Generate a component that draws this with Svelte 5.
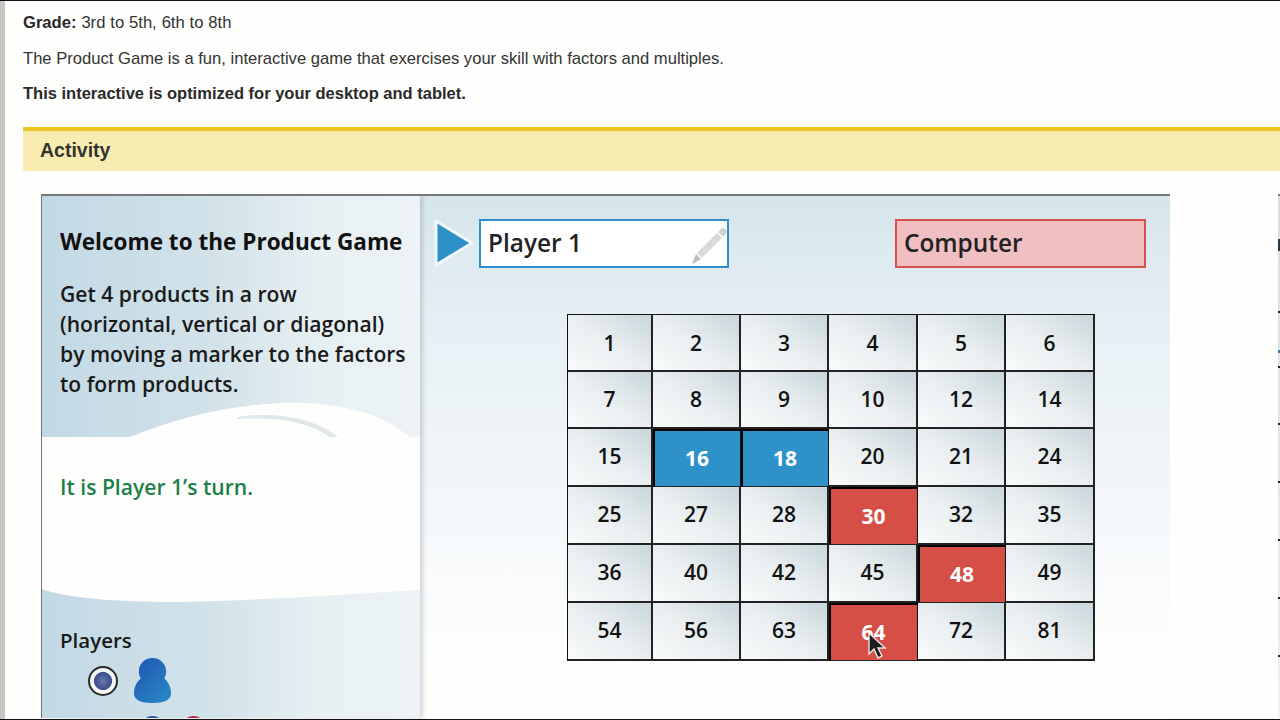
<script lang="ts">
	type Mark = 'p1' | 'p2' | null;

	const marks: Record<number, Mark> = { 16: 'p1', 18: 'p1', 30: 'p2', 48: 'p2', 64: 'p2' };
	const products = [
		1, 2, 3, 4, 5, 6, 7, 8, 9, 10, 12, 14, 15, 16, 18, 20, 21, 24, 25, 27, 28, 30, 32, 35, 36, 40,
		42, 45, 48, 49, 54, 56, 63, 64, 72, 81
	];
	// what shows of the next activity at the right edge: [gap above, height, colour]
	const sliver: [number, number, string][] = [
		[43, 12, '#2b3a48'],
		[60, 2, '#222'],
		[37, 3, '#3a78a8'],
		[13, 2, '#222'],
		[55, 2, '#222'],
		[56, 2, '#222'],
		[56, 2, '#222'],
		[56, 2, '#222'],
		[56, 2, '#222']
	];
</script>

<div class="page">
	<div class="rail"></div>
	<main class="content">
		<p class="line first"><b>Grade:</b> 3rd to 5th, 6th to 8th</p>
		<p class="line">The Product Game is a fun, interactive game that exercises your skill with factors and multiples.</p>
		<p class="line notice"><b>This interactive is optimized for your desktop and tablet.</b></p>

		<h2 class="heading">Activity</h2>

		<div class="stage-row">
			<section class="game">
				<aside class="panel">
					<svg class="cloud" viewBox="0 0 378 522" aria-hidden="true">
						<path
							d="M0 240H88C110 232 160 210 240 206C290 204 335 215 358 233L368 240H378V393C300 398 220 403 140 405C90 405 30 403 0 392Z"
							fill="#fefefc"
						/>
						<path d="M196 220C225 215 270 218 296 240H288C265 224 235 220 196 222Z" fill="#dfe7ea" />
					</svg>
					<h1>Welcome to the Product Game</h1>
					<p class="rules">
						Get 4 products in a row<br />(horizontal, vertical or diagonal)<br />by moving a marker to the factors<br />to form products.
					</p>
					<p class="turn">It is Player 1’s turn.</p>
					<h3>Players</h3>
					<div class="player-option">
						<span class="radio"></span>
						<svg class="pawn" viewBox="0 0 40 48" aria-hidden="true">
							<defs>
								<linearGradient id="pawn-blue" x1="0" y1="0" x2="1" y2="1">
									<stop offset="0" stop-color="#1f55b0" />
									<stop offset="1" stop-color="#2a8ac6" />
								</linearGradient>
							</defs>
							<path
								d="M20 1C28 1 34 7 34 15C34 18 33 20 32 22C36 25 39 31 39 37C39 44 32 47 20 47C8 47 1 44 1 37C1 31 4 25 8 22C7 20 6 18 6 15C6 7 12 1 20 1Z"
								fill="url(#pawn-blue)"
							/>
						</svg>
					</div>
					<div class="pawn-row">
						<svg class="pawn" viewBox="0 0 40 48" aria-hidden="true">
							<circle cx="20" cy="14" r="13" fill="#27509c" />
						</svg>
						<svg class="pawn" viewBox="0 0 40 48" aria-hidden="true">
							<circle cx="20" cy="14" r="13" fill="#a8283a" />
						</svg>
					</div>
				</aside>

				<div class="board-side">
					<div class="names">
						<div class="me">
							<svg class="arrow" viewBox="0 0 41 50" aria-hidden="true">
								<path d="M3 3L39 25L3 47Z" fill="#2f8fc9" stroke="#f2f7fa" stroke-width="3" stroke-linejoin="round" />
							</svg>
							<div class="name name-p1">
								Player 1
								<svg class="pencil" viewBox="0 0 36 38" aria-hidden="true">
									<path d="M1 37L5 27L10 32Z" fill="#bdbdbd" />
									<path d="M6 26L26 6L31 11L11 31Z" fill="#dadada" />
									<path d="M27 5L30 2C32 0 34 1 35 3C36 4 36 6 35 7L32 10Z" fill="#d2d2d2" />
								</svg>
							</div>
						</div>
						<div class="name name-p2">Computer</div>
					</div>

					<div class="board">
						{#each products as n}
							<div class="cell" class:p1={marks[n] === 'p1'} class:p2={marks[n] === 'p2'}>
								{n}
								{#if n === 64}
									<svg class="cursor" viewBox="0 0 20 28" aria-hidden="true">
										<path d="M2 1V22L7 17L11 26L15 24L11 16H18Z" fill="#1c1c1c" stroke="#e8e8e8" stroke-width="1.4" />
									</svg>
								{/if}
							</div>
						{/each}
					</div>
				</div>
			</section>

			<div class="next-stage">
				{#each sliver as [gap, h, colour]}
					<span style:margin-top="{gap}px" style:height="{h}px" style:background={colour}></span>
				{/each}
			</div>
		</div>
	</main>
</div>

<style>
	:global(body) {
		margin: 0;
		background: #fefefc;
		overflow: hidden;
	}
	.page {
		display: flex;
		height: 720px;
		box-sizing: border-box;
		border-top: 1px solid #111;
		border-bottom: 1px solid #111;
		overflow: hidden;
		font-family: 'Liberation Sans', Arial, sans-serif;
		color: #333;
	}
	.rail {
		flex: 0 0 5px;
		background: #c6c6c2;
	}
	.content {
		flex: 1;
		min-width: 0;
		padding: 13px 0 0 18px;
	}
	.line {
		margin: 0 0 17px;
		font-size: 16.6px;
		line-height: 18px;
	}
	.line.first {
		margin-bottom: 18px;
		word-spacing: 0.3px;
	}
	.line.notice {
		margin: -1px 0 25px;
		font-size: 16.5px;
	}
	.line b {
		color: #2a2a2a;
	}
	.heading {
		margin: 0 0 23px;
		height: 40px;
		padding-left: 17px;
		border-top: 4px solid #ecc524;
		box-sizing: content-box;
		background: #f9ecb0;
		font-size: 19.5px;
		line-height: 39px;
		font-weight: 700;
		color: #333;
	}
	.stage-row {
		display: flex;
		justify-content: space-between;
		padding-left: 18px;
	}
	.game {
		flex: 0 0 1129px;
		display: flex;
		height: 524px;
		box-sizing: border-box;
		border-top: 2px solid #777;
		border-left: 1px solid #777;
		background: linear-gradient(180deg, #d6e5ec 0%, #e6f0f4 25%, #f2f6fa 55%, #fbfcfc 80%, #fefefc 100%);
		font-family: 'Open Sans', sans-serif;
		color: #111;
	}
	.panel {
		position: relative;
		flex: 0 0 378px;
		box-sizing: border-box;
		padding: 31px 0 0 18px;
		background: linear-gradient(90deg, #c2d9e5 0%, #d2e2e9 45%, #e6eff2 72%, #edf3f6 100%);
		box-shadow: 3px 0 4px rgba(120, 130, 135, 0.3);
		overflow: hidden;
	}
	.cloud {
		position: absolute;
		left: 0;
		top: 1px;
		width: 378px;
		height: 522px;
	}
	.panel h1,
	.panel p,
	.panel h3,
	.player-option,
	.pawn-row {
		position: relative;
	}
	h1 {
		margin: 0;
		font-size: 22.55px;
		line-height: 30px;
		font-weight: 700;
		white-space: nowrap;
	}
	.rules {
		margin: 22px 0 0;
		font-size: 21.1px;
		line-height: 30px;
		font-weight: 600;
		color: #1a1a1a;
		white-space: nowrap;
	}
	.turn {
		margin: 73px 0 0;
		font-size: 21.1px;
		line-height: 30px;
		font-weight: 600;
		color: #1c8049;
	}
	h3 {
		margin: 123px 0 0;
		font-size: 20.5px;
		line-height: 30px;
		font-weight: 600;
		color: #1a1a1a;
	}
	.player-option {
		display: flex;
		align-items: center;
		gap: 15px;
		margin: 2px 0 0 28px;
	}
	.radio {
		width: 30px;
		height: 30px;
		box-sizing: border-box;
		border: 2px solid #2a2a2a;
		border-radius: 50%;
		background: radial-gradient(circle, #6678ad 0%, #3f5190 42%, #3f5190 47%, #f4f6f6 51%);
	}
	.pawn {
		flex: none;
		width: 39px;
		height: 47px;
	}
	.pawn-row {
		display: flex;
		gap: 2px;
		margin: 11px 0 0 73px;
	}
	.board-side {
		flex: 1;
		min-width: 0;
	}
	.names {
		display: flex;
		justify-content: space-between;
		align-items: center;
		padding: 22px 24px 0 13px;
	}
	.me {
		display: flex;
		align-items: center;
		gap: 6px;
	}
	.arrow {
		width: 41px;
		height: 50px;
		margin-right: -1px;
	}
	.name {
		position: relative;
		width: 251px;
		height: 49px;
		box-sizing: border-box;
		padding-left: 7px;
		font-size: 24.4px;
		line-height: 44px;
		font-weight: 600;
		color: #222;
	}
	.name-p1 {
		width: 250px;
		border: 2px solid #2f8fc9;
		background: #fff;
	}
	.name-p2 {
		border: 2px solid #d9504a;
		background: #efbfc2;
	}
	.pencil {
		position: absolute;
		right: 0;
		top: 6px;
		width: 36px;
		height: 38px;
	}
	.board {
		display: grid;
		grid-template-columns: 85px 88px 88px 89px 88px 89px;
		grid-template-rows: 57px 57px 58px 58px 58px 58px;
		width: 528px;
		margin: 46px 0 0 147px;
		box-sizing: border-box;
		border-top: 1px solid #111;
		border-left: 1px solid #111;
	}
	.cell {
		position: relative;
		display: flex;
		align-items: center;
		justify-content: center;
		box-sizing: border-box;
		padding-bottom: 3px;
		border-right: 2px solid #222;
		border-bottom: 2px solid #222;
		background: linear-gradient(to top right, #f9fbfb 0%, #e9eef0 50%, #c9d6db 100%);
		font-size: 21px;
		font-weight: 600;
		color: #111;
	}
	.cell:nth-child(-n + 6) {
		padding-bottom: 0;
	}
	.cell:nth-child(n + 7):nth-child(-n + 12) {
		padding-bottom: 1px;
	}
	.cell.p1,
	.cell.p2 {
		color: #fff;
		padding: 0 1px 2px 0;
		border-top: 2px solid #000;
		border-left: 2px solid #000;
		border-right: 1px solid #111;
		border-bottom-width: 1px;
		font-weight: 700;
	}
	.cell.p1 {
		background: #2e92c9;
	}
	.cell.p2 {
		background: #d64f46;
	}
	.cursor {
		position: absolute;
		left: 36px;
		top: 27px;
		width: 20px;
		height: 28px;
	}
	.next-stage {
		flex: 0 0 2px;
		display: flex;
		flex-direction: column;
		height: 524px;
		box-sizing: border-box;
		border-top: 2px solid #777;
		background: linear-gradient(180deg, #d6dee2 0%, #eef0f1 100%);
	}
	.next-stage span {
		display: block;
		flex: none;
	}
</style>
